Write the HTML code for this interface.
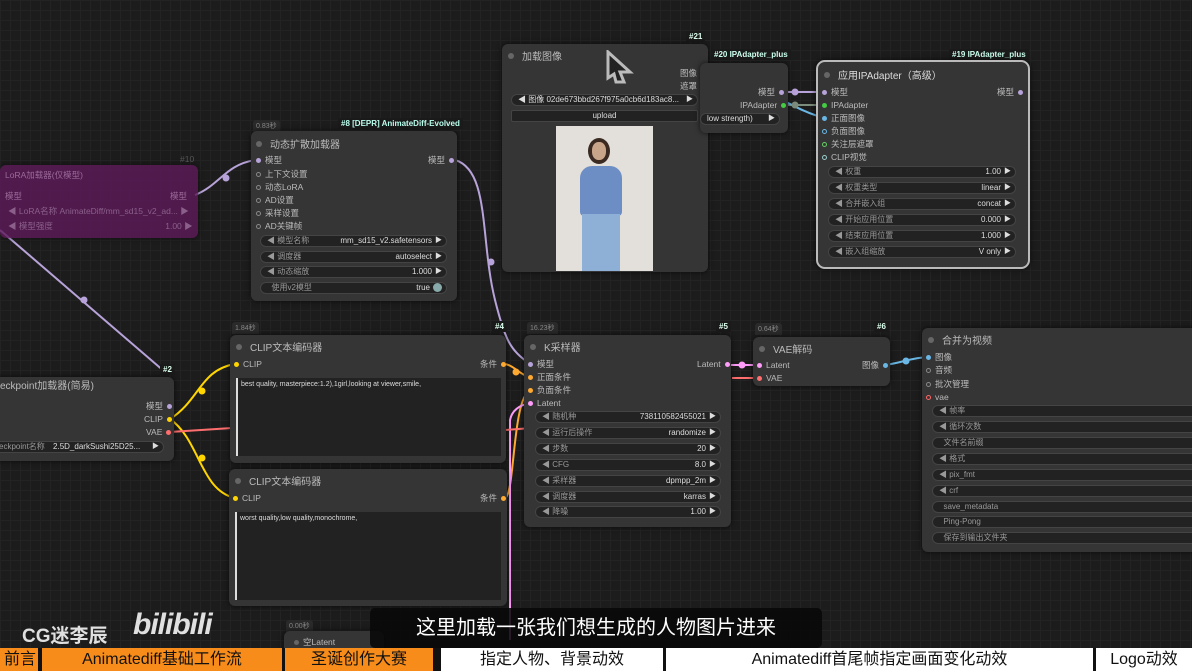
<!DOCTYPE html>
<html><head><meta charset="utf-8"><style>
*{margin:0;padding:0;box-sizing:border-box}
body{width:1192px;height:671px;overflow:hidden;position:relative;font-family:"Liberation Sans","Noto Sans CJK SC",sans-serif;color:#ccc;
background-color:#1c1c1c;background-image:linear-gradient(#232323 1px,transparent 1px),linear-gradient(90deg,#232323 1px,transparent 1px);background-size:10px 10px}
.n{position:absolute;background:#353535;border-radius:6px;box-shadow:0 0 6px #000a}
.t{position:absolute;font-size:10px;color:#bbb;white-space:nowrap}
.t::before{content:"";display:inline-block;width:6px;height:6px;border-radius:50%;background:#666;margin-right:8px;vertical-align:1px}
.l{position:absolute;font-size:8.5px;color:#bbb;white-space:nowrap;line-height:10px}
.d{display:inline-block;width:5px;height:5px;border-radius:50%;vertical-align:0;margin:0 4px}
.w{position:absolute;height:12px;background:#222;border-radius:6px;border:1px solid #444;font-size:8px;line-height:10px;color:#999;padding:0 6px;white-space:nowrap}
.w b{position:absolute;right:14px;color:#ddd;font-weight:normal}
.w i{position:absolute;right:4px;font-style:normal;color:#ddd;font-size:7px}
.bd{position:absolute;font-size:7px;color:#888;background:#2a2a2a;padding:1px 3px;border-radius:3px 3px 0 0}
.id{position:absolute;font-size:8px;color:#dfe;font-weight:bold;background:#1a1a1a;padding:1px 3px}
.ta{position:absolute;background:#222;border-left:2px solid #ddd;font-size:7px;color:#ddd;padding:3px}
</style></head><body>
<svg width="1192" height="671" style="position:absolute;left:0;top:0" fill="none" stroke-width="2">
<path d="M195 195 C220 185,225 165,255 160" stroke="#b7a3d9"/>
<path d="M0 230 L165 372" stroke="#b7a3d9"/>
<path d="M455 160 C490 170,480 240,495 300 C505 340,510 350,530 364" stroke="#b7a3d9"/>
<path d="M785 92 L825 92" stroke="#b7a3d9"/>
<path d="M785 105 L825 105" stroke="#7c8c7c"/>
<path d="M706 73 C760 80,790 110,825 118" stroke="#6ab7e6"/>
<path d="M170 419 C200 400,200 370,235 364" stroke="#ffd500"/>
<path d="M170 419 C200 440,200 490,235 498" stroke="#ffd500"/>
<path d="M170 432 L232 428" stroke="#ff6e6e"/>
<path d="M505 364 C515 366,520 375,530 377" stroke="#ffa931"/>
<path d="M505 498 C515 495,512 400,530 390" stroke="#ffa931"/>
<path d="M730 365 L760 365" stroke="#ff9cf9"/>
<path d="M510 640 L510 420 C512 410,520 405,530 403" stroke="#ff9cf9"/>
<path d="M505 430 L532 428" stroke="#ff6e6e"/>
<path d="M732 378 L760 378" stroke="#ff6e6e"/>
<path d="M885 365 C905 362,910 358,928 357" stroke="#6ab7e6"/>
<g stroke="none"><circle cx="226" cy="178" r="3.5" fill="#b7a3d9"/><circle cx="84" cy="300" r="3.5" fill="#b7a3d9"/><circle cx="491" cy="262" r="3.5" fill="#b7a3d9"/><circle cx="795" cy="92" r="3.5" fill="#b7a3d9"/><circle cx="795" cy="105" r="3.5" fill="#7c8c7c"/><circle cx="202" cy="391" r="3.5" fill="#ffd500"/><circle cx="202" cy="458" r="3.5" fill="#ffd500"/><circle cx="516" cy="372" r="3.5" fill="#ffa931"/><circle cx="742" cy="365" r="3.5" fill="#ff9cf9"/><circle cx="906" cy="361" r="3.5" fill="#6ab7e6"/></g>
</svg>

<!-- LoRA -->
<div class="n" style="left:0;top:165px;width:198px;height:73px;background:#5e1a5a;opacity:.8"></div>
<div class="l" style="left:5px;top:170px;color:#9a6a9a">LoRA加载器(仅模型)</div>
<div class="l" style="left:5px;top:191px;color:#9a6a9a">模型</div><div class="l" style="left:170px;top:191px;color:#9a6a9a">模型</div>
<div class="l" style="left:8px;top:206px;color:#8a608a">◀ LoRA名称 AnimateDiff/mm_sd15_v2_ad... ▶</div>
<div class="l" style="left:8px;top:221px;color:#8a608a">◀ 模型强度 <span style="margin-left:110px">1.00 ▶</span></div>
<div class="l" style="left:180px;top:154px;color:#555">#10</div>

<!-- #8 -->
<div class="bd" style="left:253px;top:120px">0.83秒</div>
<div class="id" style="left:338px;top:118px;color:#bfe">#8 [DEPR] AnimateDiff-Evolved</div>
<div class="n" style="left:251px;top:131px;width:206px;height:170px"></div>
<div class="t" style="left:256px;top:136px">动态扩散加载器</div>
<div class="l" style="left:252px;top:155px"><span class="d" style="background:#b7a3d9"></span>模型</div>
<div class="l" style="left:428px;top:155px">模型<span class="d" style="background:#b7a3d9"></span></div>
<div class="l" style="left:252px;top:169px"><span class="d" style="border:1px solid #888"></span>上下文设置</div>
<div class="l" style="left:252px;top:182px"><span class="d" style="border:1px solid #888"></span>动态LoRA</div>
<div class="l" style="left:252px;top:195px"><span class="d" style="border:1px solid #888"></span>AD设置</div>
<div class="l" style="left:252px;top:208px"><span class="d" style="border:1px solid #888"></span>采样设置</div>
<div class="l" style="left:252px;top:221px"><span class="d" style="border:1px solid #888"></span>AD关键帧</div>
<div class="w" style="left:260px;top:235px;width:187px">◀ 模型名称<b>mm_sd15_v2.safetensors</b><i>▶</i></div>
<div class="w" style="left:260px;top:251px;width:187px">◀ 调度器<b>autoselect</b><i>▶</i></div>
<div class="w" style="left:260px;top:266px;width:187px">◀ 动态缩放<b>1.000</b><i>▶</i></div>
<div class="w" style="left:260px;top:282px;width:187px">&nbsp;&nbsp;使用v2模型<b style="right:16px">true</b><i style="width:9px;height:9px;border-radius:50%;background:#8aa;top:0"></i></div>

<!-- #21 -->
<div class="id" style="left:686px;top:31px">#21</div>
<div class="n" style="left:502px;top:44px;width:206px;height:228px"></div>
<div class="t" style="left:508px;top:48px">加载图像</div>
<svg style="position:absolute;left:602px;top:50px" width="34" height="36"><path d="M6 2 L28 22 L18 22 L22 32 L14 32 L12 24 L6 28 Z" fill="#222" stroke="#bbb" stroke-width="3"/></svg>
<div class="l" style="left:680px;top:68px">图像<span class="d" style="background:#6ab7e6"></span></div>
<div class="l" style="left:680px;top:81px">遮罩<span class="d" style="background:#6c6"></span></div>
<div class="w" style="left:511px;top:94px;width:187px;color:#ddd">◀ 图像 02de673bbd267f975a0cb6d183ac8...<i>▶</i></div>
<div class="w" style="left:511px;top:110px;width:187px;border-radius:2px;text-align:center;color:#ddd">upload</div>
<div style="position:absolute;left:556px;top:126px;width:97px;height:145px;background:#e3e0dc;overflow:hidden">
<div style="position:absolute;left:32px;top:12px;width:22px;height:26px;background:#3a2a22;border-radius:50%"></div>
<div style="position:absolute;left:36px;top:16px;width:14px;height:18px;background:#c9a58a;border-radius:45%"></div>
<div style="position:absolute;left:24px;top:40px;width:42px;height:50px;background:#6d8ec4;border-radius:12px 12px 4px 4px"></div>
<div style="position:absolute;left:26px;top:88px;width:38px;height:57px;background:#8fb0d6"></div>
</div>

<!-- #20 -->
<div class="id" style="left:711px;top:49px;color:#cfe">#20 IPAdapter_plus</div>
<div class="n" style="left:700px;top:63px;width:88px;height:70px"></div>
<div class="l" style="left:758px;top:87px">模型<span class="d" style="background:#b7a3d9"></span></div>
<div class="l" style="left:740px;top:100px">IPAdapter<span class="d" style="background:#4c4"></span></div>
<div class="w" style="left:700px;top:113px;width:80px;color:#ddd">low strength)<i>▶</i></div>

<!-- #19 -->
<div class="id" style="left:949px;top:49px;color:#cfe">#19 IPAdapter_plus</div>
<div class="n" style="left:816px;top:60px;width:214px;height:209px;border:2px solid #bbb;border-radius:9px"></div>
<div class="t" style="left:824px;top:67px;color:#ddd">应用IPAdapter（高级）</div>
<div class="l" style="left:818px;top:87px"><span class="d" style="background:#b7a3d9"></span>模型</div>
<div class="l" style="left:997px;top:87px">模型<span class="d" style="background:#b7a3d9"></span></div>
<div class="l" style="left:818px;top:100px"><span class="d" style="background:#4c4"></span>IPAdapter</div>
<div class="l" style="left:818px;top:113px"><span class="d" style="background:#6ab7e6"></span>正面图像</div>
<div class="l" style="left:818px;top:126px"><span class="d" style="border:1px solid #6ab7e6"></span>负面图像</div>
<div class="l" style="left:818px;top:139px"><span class="d" style="border:1px solid #6c6"></span>关注层遮罩</div>
<div class="l" style="left:818px;top:152px"><span class="d" style="border:1px solid #9cc"></span>CLIP视觉</div>
<div class="w" style="left:828px;top:166px;width:188px">◀ 权重<b>1.00</b><i>▶</i></div>
<div class="w" style="left:828px;top:182px;width:188px">◀ 权重类型<b>linear</b><i>▶</i></div>
<div class="w" style="left:828px;top:198px;width:188px">◀ 合并嵌入组<b>concat</b><i>▶</i></div>
<div class="w" style="left:828px;top:214px;width:188px">◀ 开始应用位置<b>0.000</b><i>▶</i></div>
<div class="w" style="left:828px;top:230px;width:188px">◀ 结束应用位置<b>1.000</b><i>▶</i></div>
<div class="w" style="left:828px;top:246px;width:188px">◀ 嵌入组缩放<b>V only</b><i>▶</i></div>

<!-- #2 -->
<div class="id" style="left:160px;top:364px">#2</div>
<div class="n" style="left:-6px;top:377px;width:180px;height:84px"></div>
<div class="l" style="left:0;top:382px;font-size:10px">eckpoint加载器(简易)</div>
<div class="l" style="left:146px;top:401px">模型<span class="d" style="background:#b7a3d9"></span></div>
<div class="l" style="left:144px;top:414px">CLIP<span class="d" style="background:#ffd500"></span></div>
<div class="l" style="left:146px;top:427px">VAE<span class="d" style="background:#ff6e6e"></span></div>
<div class="w" style="left:-8px;top:441px;width:172px">eckpoint名称 <span style="color:#ddd;margin-left:6px">2.5D_darkSushi25D25...</span><i>▶</i></div>

<!-- CLIP1 -->
<div class="bd" style="left:232px;top:322px">1.84秒</div>
<div class="id" style="left:492px;top:321px">#4</div>
<div class="n" style="left:230px;top:335px;width:276px;height:128px"></div>
<div class="t" style="left:236px;top:339px">CLIP文本编码器</div>
<div class="l" style="left:230px;top:359px"><span class="d" style="background:#ffd500"></span>CLIP</div>
<div class="l" style="left:480px;top:359px">条件<span class="d" style="background:#ffa931"></span></div>
<div class="ta" style="left:236px;top:378px;width:265px;height:78px">best quality, masterpiece:1.2),1girl,looking at viewer,smile,</div>
<!-- CLIP2 -->
<div class="n" style="left:229px;top:469px;width:278px;height:137px"></div>
<div class="t" style="left:235px;top:473px">CLIP文本编码器</div>
<div class="l" style="left:229px;top:493px"><span class="d" style="background:#ffd500"></span>CLIP</div>
<div class="l" style="left:480px;top:493px">条件<span class="d" style="background:#ffa931"></span></div>
<div class="ta" style="left:235px;top:512px;width:266px;height:88px">worst quality,low quality,monochrome,</div>

<!-- K sampler -->
<div class="bd" style="left:527px;top:322px">16.23秒</div>
<div class="id" style="left:716px;top:321px">#5</div>
<div class="n" style="left:524px;top:335px;width:207px;height:192px"></div>
<div class="t" style="left:530px;top:339px">K采样器</div>
<div class="l" style="left:524px;top:359px"><span class="d" style="background:#b7a3d9"></span>模型</div>
<div class="l" style="left:697px;top:359px">Latent<span class="d" style="background:#ff9cf9"></span></div>
<div class="l" style="left:524px;top:372px"><span class="d" style="background:#ffa931"></span>正面条件</div>
<div class="l" style="left:524px;top:385px"><span class="d" style="background:#ffa931"></span>负面条件</div>
<div class="l" style="left:524px;top:398px"><span class="d" style="background:#ff9cf9"></span>Latent</div>
<div class="w" style="left:535px;top:411px;width:186px">◀ 随机种<b>738110582455021</b><i>▶</i></div>
<div class="w" style="left:535px;top:427px;width:186px">◀ 运行后操作<b>randomize</b><i>▶</i></div>
<div class="w" style="left:535px;top:443px;width:186px">◀ 步数<b>20</b><i>▶</i></div>
<div class="w" style="left:535px;top:459px;width:186px">◀ CFG<b>8.0</b><i>▶</i></div>
<div class="w" style="left:535px;top:475px;width:186px">◀ 采样器<b>dpmpp_2m</b><i>▶</i></div>
<div class="w" style="left:535px;top:491px;width:186px">◀ 调度器<b>karras</b><i>▶</i></div>
<div class="w" style="left:535px;top:506px;width:186px">◀ 降噪<b>1.00</b><i>▶</i></div>

<!-- VAE -->
<div class="bd" style="left:755px;top:323px">0.64秒</div>
<div class="id" style="left:874px;top:321px">#6</div>
<div class="n" style="left:753px;top:337px;width:137px;height:49px"></div>
<div class="t" style="left:759px;top:341px">VAE解码</div>
<div class="l" style="left:753px;top:360px"><span class="d" style="background:#ff9cf9"></span>Latent</div>
<div class="l" style="left:753px;top:373px"><span class="d" style="background:#ff6e6e"></span>VAE</div>
<div class="l" style="left:862px;top:360px">图像<span class="d" style="background:#6ab7e6"></span></div>

<!-- merge -->
<div class="n" style="left:922px;top:328px;width:280px;height:224px"></div>
<div class="t" style="left:928px;top:332px">合并为视频</div>
<div class="l" style="left:922px;top:352px"><span class="d" style="background:#6ab7e6"></span>图像</div>
<div class="l" style="left:922px;top:365px"><span class="d" style="border:1px solid #888"></span>音频</div>
<div class="l" style="left:922px;top:379px"><span class="d" style="border:1px solid #888"></span>批次管理</div>
<div class="l" style="left:922px;top:392px"><span class="d" style="border:1px solid #f66"></span>vae</div>
<div class="w" style="left:932px;top:405px;width:270px">◀ 帧率</div>
<div class="w" style="left:932px;top:421px;width:270px">◀ 循环次数</div>
<div class="w" style="left:932px;top:437px;width:270px">&nbsp; 文件名前缀</div>
<div class="w" style="left:932px;top:453px;width:270px">◀ 格式</div>
<div class="w" style="left:932px;top:469px;width:270px">◀ pix_fmt</div>
<div class="w" style="left:932px;top:485px;width:270px">◀ crf</div>
<div class="w" style="left:932px;top:501px;width:270px">&nbsp; save_metadata</div>
<div class="w" style="left:932px;top:516px;width:270px">&nbsp; Ping-Pong</div>
<div class="w" style="left:932px;top:532px;width:270px">&nbsp; 保存到输出文件夹</div>

<!-- empty latent -->
<div class="bd" style="left:286px;top:620px">0.00秒</div>
<div class="n" style="left:284px;top:631px;width:100px;height:30px"></div>
<div class="l" style="left:290px;top:637px"><span class="d" style="background:#666"></span>空Latent</div>

<!-- watermark -->
<div style="position:absolute;left:22px;top:621px;font-size:19px;color:#e0e0e0;font-weight:bold">CG迷李辰</div>
<div style="position:absolute;left:133px;top:608px;font-size:30px;color:#e0e0e0;font-weight:bold;font-style:italic;letter-spacing:-1px">bilibili</div>

<!-- subtitle -->
<div style="position:absolute;left:370px;top:608px;width:452px;height:40px;background:rgba(8,8,8,.88);border-radius:5px;color:#fff;font-size:20px;text-align:center;line-height:40px">这里加载一张我们想生成的人物图片进来</div>

<!-- bottom bar -->
<div style="position:absolute;left:0;top:648px;width:1192px;height:23px;background:#fff;font-size:16px;line-height:23px;color:#111;white-space:nowrap">
<span style="position:absolute;left:0;width:40px;background:#f78c1a;text-align:center">前言</span>
<span style="position:absolute;left:38px;width:4px;height:23px;background:#111"></span>
<span style="position:absolute;left:42px;width:240px;background:#f78c1a;text-align:center">Animatediff基础工作流</span>
<span style="position:absolute;left:282px;width:3px;height:23px;background:#111"></span>
<span style="position:absolute;left:285px;width:148px;background:#f78c1a;text-align:center">圣诞创作大赛</span>
<span style="position:absolute;left:433px;width:8px;height:23px;background:#111"></span>
<span style="position:absolute;left:441px;width:222px;text-align:center">指定人物、背景动效</span>
<span style="position:absolute;left:663px;width:3px;height:23px;background:#111"></span>
<span style="position:absolute;left:666px;width:427px;text-align:center">Animatediff首尾帧指定画面变化动效</span>
<span style="position:absolute;left:1093px;width:3px;height:23px;background:#111"></span>
<span style="position:absolute;left:1096px;width:96px;text-align:center">Logo动效</span>
</div>
</body></html>
